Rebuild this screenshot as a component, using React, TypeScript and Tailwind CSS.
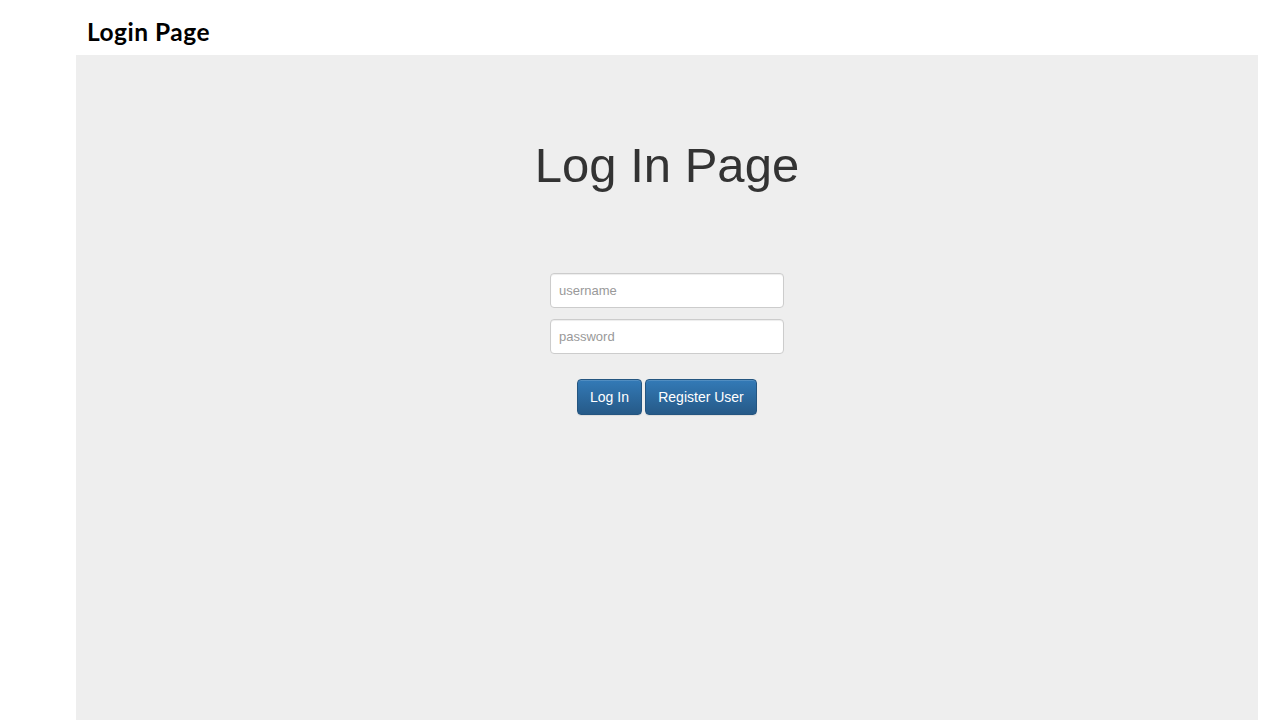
import React from "react";

export default function App() {
  return (
    <div className="w-[1280px] h-[720px] bg-white overflow-hidden flex flex-col">
      <div className="h-[55px] pl-[87px] pt-[17px]">
        <h1 className="text-[24.5px] leading-[30px] font-bold text-black font-['Lato',sans-serif] tracking-[0.5px]">
          Login Page
        </h1>
      </div>
      <div className="ml-[76px] w-[1182px] flex-1 bg-[#eeeeee] flex flex-col items-center pt-[86px] font-['Liberation_Sans',Arial,sans-serif]">
        <h2 className="text-[49px] leading-none text-[#333333]">Log In Page</h2>
        <form className="mt-[83px] flex flex-col items-center">
          <input
            type="text"
            placeholder="username"
            className="w-[234px] h-[35px] px-[8px] bg-white border border-[#cccccc] rounded-[4px] text-[13px] text-[#555] placeholder:text-[#999999] shadow-[inset_0_1px_1px_rgba(0,0,0,0.075)] outline-none"
          />
          <input
            type="password"
            placeholder="password"
            className="mt-[11px] w-[234px] h-[35px] px-[8px] bg-white border border-[#cccccc] rounded-[4px] text-[13px] text-[#555] placeholder:text-[#999999] shadow-[inset_0_1px_1px_rgba(0,0,0,0.075)] outline-none"
          />
          <div className="mt-[25px] flex gap-[3px]">
            <button
              type="submit"
              className="w-[65px] h-[36px] rounded-[4px] border border-[#245580] bg-gradient-to-b from-[#337ab7] to-[#265a88] text-white text-[14px] shadow-[inset_0_1px_0_rgba(255,255,255,0.15),0_1px_1px_rgba(0,0,0,0.075)]"
            >
              Log In
            </button>
            <button
              type="button"
              className="w-[112px] h-[36px] rounded-[4px] border border-[#245580] bg-gradient-to-b from-[#337ab7] to-[#265a88] text-white text-[14px] shadow-[inset_0_1px_0_rgba(255,255,255,0.15),0_1px_1px_rgba(0,0,0,0.075)]"
            >
              Register User
            </button>
          </div>
        </form>
      </div>
    </div>
  );
}
